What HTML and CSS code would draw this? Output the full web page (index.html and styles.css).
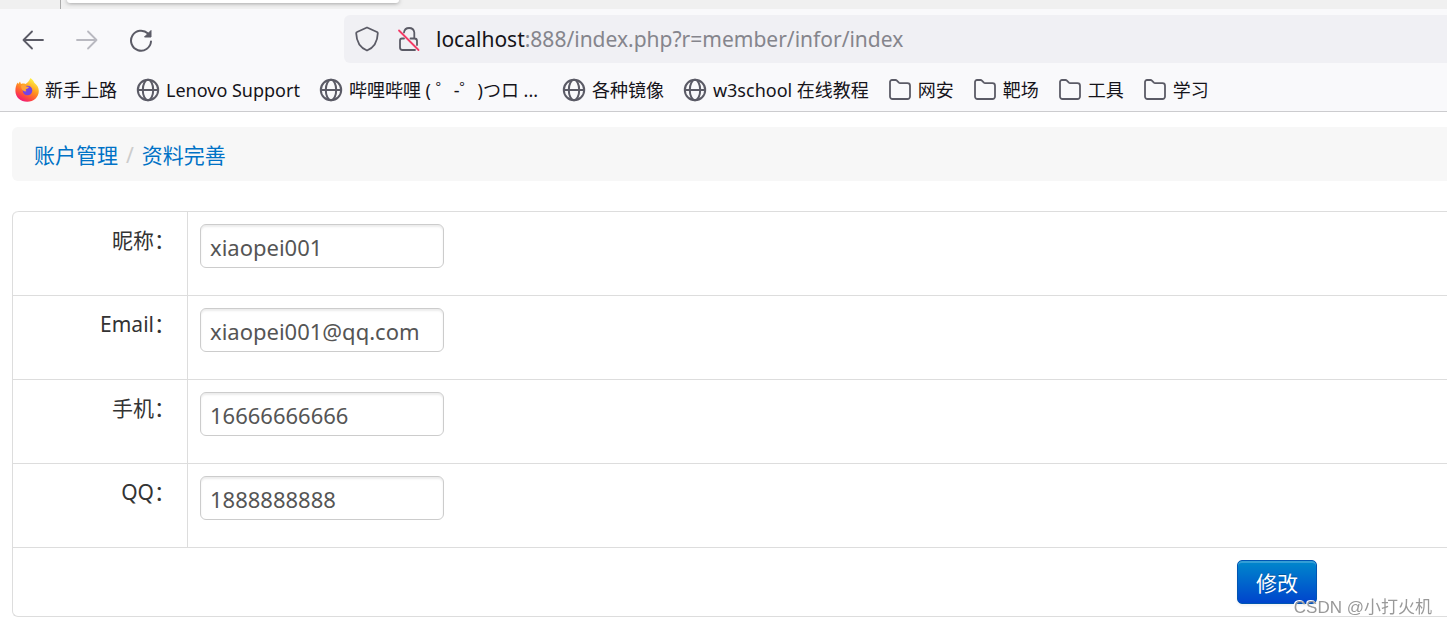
FILE: index.html
```
<!DOCTYPE html>
<html lang="zh-CN">
<head>
    <meta charset="UTF-8">
    <meta name="viewport" content="width=device-width, initial-scale=1.0">
    <title>资料完善</title>
    <link rel="stylesheet" href="styles.css">
</head>
<body>
    <svg class="sprite" width="0" height="0">
        <symbol id="globe" viewBox="0 0 24 24">
            <g fill="none" stroke="#5b5b66" stroke-width="2">
                <circle cx="12" cy="12" r="10.2"/>
                <ellipse cx="12" cy="12" rx="5.2" ry="10.2"/>
                <path d="M2 12h20"/>
            </g>
        </symbol>
        <symbol id="folder" viewBox="0 0 24 24">
            <path d="M4 2h3.500c.6 0 1 .2 1.400.6l2 2.100c.3.3.7.5 1.100.5H19.500A2.500 2.500 0 0 1 22 7.700V18.500a2.500 2.500 0 0 1-2.500 2.500H4.500A2.500 2.500 0 0 1 2 18.500V4a2 2 0 0 1 2-2z" fill="none" stroke="#5b5b66" stroke-width="1.800"/>
        </symbol>
    </svg>

    <header class="browser">
        <div class="tab-strip">
            <div class="tab"></div>
        </div>
        <div class="toolbar">
            <div class="nav-buttons">
                <button type="button" aria-label="后退">
                    <svg width="24" height="24" viewBox="0 0 24 24" fill="none" stroke="#5b5b66" stroke-width="1.800" stroke-linecap="round" stroke-linejoin="round"><path d="M22 13H2.500M11 4.500L2.500 13l8.500 8.500"/></svg>
                </button>
                <button type="button" aria-label="前进" disabled>
                    <svg width="24" height="24" viewBox="0 0 24 24" fill="none" stroke="#b9b9c0" stroke-width="1.800" stroke-linecap="round" stroke-linejoin="round"><path d="M2 13h19.500M13 4.500l8.500 8.500-8.500 8.500"/></svg>
                </button>
                <button type="button" aria-label="刷新">
                    <svg width="24" height="25" viewBox="0 0 24 25"><path d="M19 6.500A10 10 0 1 0 22 14.500" fill="none" stroke="#5b5b66" stroke-width="2" stroke-linecap="round"/><path d="M22 3.500v6.500h-6.500z" fill="#5b5b66" stroke="#5b5b66" stroke-linejoin="round"/></svg>
                </button>
            </div>
            <div class="url-bar">
                <svg width="26" height="26" viewBox="0 0 26 26"><path d="M13 1.500L23 6c.5.3.8.700.8 1.200C23.500 16 19 22 13 24.500 7 22 2.500 16 2.200 7.200c0-.5.3-1 .8-1.200z" fill="none" stroke="#5b5b66" stroke-width="1.800" stroke-linejoin="round"/></svg>
                <svg width="26" height="26" viewBox="0 0 26 26" fill="none" stroke-width="1.800" stroke-linecap="round"><path d="M9 6.500a5.200 5.200 0 0 1 10.300 0v5.500M15.500 12.500H19.500a2.500 2.500 0 0 1 2.500 2.500v4M5 14.500v7a2.500 2.500 0 0 0 2.500 2.500h12.500M5 14.500a2 2 0 0 1 2-2h2" stroke="#5b5b66"/><path d="M4 4.500l19.500 19.500" stroke="#f33b66"/></svg>
                <span class="url"><b>localhost</b>:888/index.php?r=member/infor/index</span>
            </div>
        </div>
        <nav class="bookmarks">
            <a href="#">
                <svg viewBox="0 0 24 24">
                    <defs>
                        <linearGradient id="flame" x1=".8" y1=".1" x2=".3" y2="1">
                            <stop offset="0" stop-color="#fff044"/>
                            <stop offset=".4" stop-color="#ff9a1f"/>
                            <stop offset=".75" stop-color="#ff4a3d"/>
                            <stop offset="1" stop-color="#f0147e"/>
                        </linearGradient>
                    </defs>
                    <path d="M15.500 0c2 1.500 3.200 3 3.800 4.800C22 6.800 23.800 9.500 23.800 13c0 6-5 10.800-11.600 10.800S.4 19.200.4 13C.4 9.500 1 7 2.500 4.500L3.200 6 5 3.500 6 6c1.500-.6 3-.6 4.500 0 2-1 3.700-3 5-6z" fill="url(#flame)"/>
                    <circle cx="12.500" cy="12.500" r="4.800" fill="#7642e5"/>
                    <path d="M6 7.500c2-1 4-.5 5.500 1l2.500.5c-.5 1.200-1.500 1.500-2.800 2-.8.7-.5 1.700.5 2-1.700 1-3.700 0-4.700-1.500C6.500 10.500 6 9 6 7.500z" fill="#ffa436"/>
                </svg>
                <span>新手上路</span>
            </a>
            <a href="#"><svg><use href="#globe"/></svg><span>Lenovo Support</span></a>
            <a href="#"><svg><use href="#globe"/></svg><span class="long">哔哩哔哩 ( ゜-゜)つロ ...</span></a>
            <a href="#"><svg><use href="#globe"/></svg><span>各种镜像</span></a>
            <a href="#"><svg><use href="#globe"/></svg><span>w3school 在线教程</span></a>
            <a href="#"><svg><use href="#folder"/></svg><span>网安</span></a>
            <a href="#"><svg><use href="#folder"/></svg><span>靶场</span></a>
            <a href="#"><svg><use href="#folder"/></svg><span>工具</span></a>
            <a href="#"><svg><use href="#folder"/></svg><span>学习</span></a>
        </nav>
    </header>

    <main>
        <ul class="breadcrumb">
            <li><a href="#">账户管理</a></li>
            <li class="divider">/</li>
            <li><a href="#">资料完善</a></li>
        </ul>

        <form id="inforForm">
            <table class="table">
                <tr>
                    <td class="label"><label for="nickname">昵称：</label></td>
                    <td><input type="text" id="nickname" name="nickname" value="xiaopei001"></td>
                </tr>
                <tr>
                    <td class="label"><label for="email">Email：</label></td>
                    <td><input type="text" id="email" name="email" value="xiaopei001@qq.com"></td>
                </tr>
                <tr>
                    <td class="label"><label for="phone">手机：</label></td>
                    <td><input type="text" id="phone" name="phone" value="16666666666"></td>
                </tr>
                <tr>
                    <td class="label"><label for="qq">QQ：</label></td>
                    <td><input type="text" id="qq" name="qq" value="1888888888"></td>
                </tr>
                <tr>
                    <td class="actions" colspan="2"><button type="submit" class="btn-primary">修改</button></td>
                </tr>
            </table>
        </form>
    </main>
    <div class="watermark">CSDN @小打火机</div>
</body>
</html>
```
FILE: styles.css
```
* {
    box-sizing: border-box;
}
body {
    margin: 0;
    background-color: #fff;
    color: #333;
    font-family: "Noto Sans", "Noto Sans CJK SC", sans-serif;
    font-size: 21px;
    line-height: 30px;
}
a {
    color: #0072c6;
    text-decoration: none;
}
.sprite {
    display: block;
}

/* browser bar */
.browser {
    background-color: #f9f9fb;
    border-bottom: 1px solid #cccccf;
    color: #15141a;
}
.tab-strip {
    height: 9px;
    padding-left: 60px;
    background-color: #f0f0f0;
    overflow: hidden;
}
.tab {
    width: 339px;
    height: 9px;
    border-left: 1px solid #aaa;
}
.tab::after {
    content: "";
    display: block;
    height: 3px;
    margin-left: 6px;
    background-color: #fff;
    border-radius: 0 0 5px 5px;
    box-shadow: 0 0 4px rgba(0, 0, 0, 0.5);
}
.toolbar {
    display: flex;
    align-items: center;
    padding-top: 6px;
}
.nav-buttons {
    display: flex;
    gap: 30px;
    width: 344px;
    padding-left: 21px;
}
.nav-buttons button {
    display: flex;
    padding: 0;
    border: none;
    background: none;
}
.url-bar {
    display: flex;
    flex: 1;
    align-items: center;
    gap: 15px;
    height: 48px;
    padding-left: 10px;
    background-color: #f0f0f4;
    border-radius: 6px 0 0 6px;
}
.url {
    color: #85858c;
    font-size: 21px;
    white-space: nowrap;
}
.url b {
    color: #15141a;
    font-weight: normal;
}
.bookmarks {
    display: flex;
    align-items: center;
    gap: 19px;
    height: 48px;
    padding: 6px 0 0 15px;
    font-size: 18px;
    white-space: nowrap;
}
.bookmarks a {
    display: flex;
    align-items: center;
    gap: 6px;
    color: #15141a;
}
.bookmarks svg {
    width: 24px;
    height: 24px;
}
.bookmarks .long {
    width: 194px;
}

/* page */
main {
    padding: 15px 0 8px 12px;
}
.breadcrumb {
    display: flex;
    gap: 8px;
    margin: 0 0 30px;
    padding: 13px 22px 11px;
    background-color: #f7f7f7;
    border-radius: 6px 0 0 6px;
    list-style: none;
}
.divider {
    color: #ccc;
}
.table {
    width: 100%;
    border: 1px solid #ddd;
    border-top: none;
    border-right: none;
    border-radius: 6px 0 0 6px;
    border-spacing: 0;
}
.table td {
    padding: 12px;
    border-top: 1px solid #ddd;
    vertical-align: top;
}
.table tr:first-child td:first-child {
    border-top-left-radius: 6px;
}
.table td + td {
    border-left: 1px solid #ddd;
}
.table .label {
    width: 174px;
    padding-top: 13px;
    text-align: right;
}
.table input {
    display: block;
    width: 244px;
    height: 44px;
    margin: 0 0 15px;
    padding: 8px 9px 6px;
    border: 1px solid #ccc;
    border-radius: 6px;
    box-shadow: inset 0 2px 2px rgba(0, 0, 0, 0.075);
    color: #555;
    font-family: inherit;
    font-size: 22px;
}
.table .actions {
    padding-right: 130px;
    text-align: right;
}
.btn-primary {
    display: block;
    width: 80px;
    height: 44px;
    margin-left: auto;
    padding: 0;
    border: 1px solid #0055b3;
    border-radius: 5px;
    background: linear-gradient(#0088cc, #0044cc);
    box-shadow: inset 0 2px 0 rgba(255, 255, 255, 0.2), 0 2px 3px rgba(0, 0, 0, 0.05);
    color: #fff;
    font-family: inherit;
    font-size: 21px;
    text-shadow: 0 -1px 0 rgba(0, 0, 0, 0.25);
    cursor: pointer;
}
.watermark {
    position: fixed;
    right: 15px;
    bottom: 2px;
    color: #999;
    font-family: "Liberation Sans", "Noto Sans CJK SC", sans-serif;
    font-size: 17px;
    text-shadow: -1px -1px 0 #fff;
}
```
